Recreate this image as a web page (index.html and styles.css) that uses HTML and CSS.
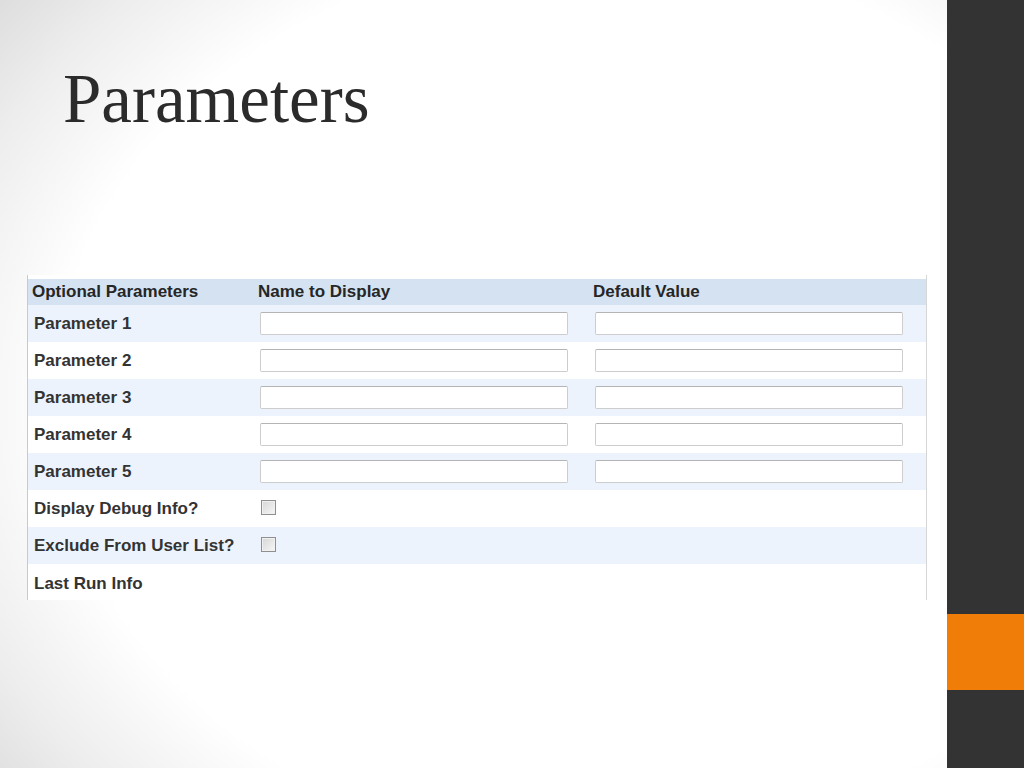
FILE: index.html
```html
<!DOCTYPE html>
<html>

<head>
  <title>Parameters</title>
  <link rel="stylesheet" href="styles.css">
</head>

<body>
  <div class="slide">
    <div class="main">
      <h1 class="title">Parameters</h1>

      <div class="params">
        <div class="row head">
          <div class="cell label">Optional Parameters</div>
          <div class="cell">Name to Display</div>
          <div class="cell">Default Value</div>
        </div>
        <div class="row alt">
          <div class="cell label">Parameter 1</div>
          <div class="cell"><input type="text" class="field"></div>
          <div class="cell"><input type="text" class="field"></div>
        </div>
        <div class="row">
          <div class="cell label">Parameter 2</div>
          <div class="cell"><input type="text" class="field"></div>
          <div class="cell"><input type="text" class="field"></div>
        </div>
        <div class="row alt">
          <div class="cell label">Parameter 3</div>
          <div class="cell"><input type="text" class="field"></div>
          <div class="cell"><input type="text" class="field"></div>
        </div>
        <div class="row">
          <div class="cell label">Parameter 4</div>
          <div class="cell"><input type="text" class="field"></div>
          <div class="cell"><input type="text" class="field"></div>
        </div>
        <div class="row alt">
          <div class="cell label">Parameter 5</div>
          <div class="cell"><input type="text" class="field"></div>
          <div class="cell"><input type="text" class="field"></div>
        </div>
        <div class="row">
          <div class="cell label">Display Debug Info?</div>
          <div class="cell"><span class="check"></span></div>
          <div class="cell"></div>
        </div>
        <div class="row alt">
          <div class="cell label">Exclude From User List?</div>
          <div class="cell"><span class="check"></span></div>
          <div class="cell"></div>
        </div>
        <div class="row last">
          <div class="cell label">Last Run Info</div>
          <div class="cell"></div>
          <div class="cell"></div>
        </div>
      </div>
    </div>

    <div class="side">
      <div class="accent"></div>
    </div>
  </div>
</body>

</html>
```

FILE: styles.css
```css
body {
  margin: 0;
  font-family: "Liberation Sans", Arial, sans-serif;
}

.slide {
  display: flex;
  width: 1024px;
  height: 768px;
  overflow: hidden;
}

.main {
  width: 947px;
  height: 768px;
  background: radial-gradient(ellipse 680px 560px at 600px 400px, #ffffff 0%, #ffffff 80%, #ededed 100%, #d6d6d6 120%);
  padding-top: 57px;
  box-sizing: border-box;
}

.title {
  margin: 0 0 0 63px;
  font-family: "Liberation Serif", "Times New Roman", serif;
  font-weight: normal;
  font-size: 69px;
  line-height: 84px;
  color: #2b2b2b;
}

.params {
  margin: 134px 0 0 27px;
  width: 898px;
  border-left: 1px solid #c9c9c9;
  border-right: 1px solid #d6d6d6;
  padding-top: 4px;
  background: #fff;
  color: #333;
  font-size: 17px;
  font-weight: bold;
}

.row {
  display: grid;
  grid-template-columns: 228px 335px 1fr;
  align-items: center;
  height: 37px;
}

.row.head {
  height: 26px;
  background-color: #d4e2f1;
  color: #262626;
}

.row.alt {
  background-color: #edf3fc;
}

.row.last {
  height: 36px;
}

.cell {
  padding-left: 2px;
}

.label {
  padding-left: 6px;
  padding-top: 1px;
}

.head .label {
  padding-left: 4px;
  padding-top: 0;
}

.last .label {
  padding-top: 3px;
}

.field {
  display: block;
  width: 308px;
  height: 23px;
  margin-left: 2px;
  box-sizing: border-box;
  border: 1px solid #cdcdcd;
  border-top-color: #b4b4b4;
  border-radius: 2px;
  background: #fff;
  padding: 0 4px;
}

.check {
  display: block;
  width: 15px;
  height: 15px;
  margin: 0 0 3px 3px;
  box-sizing: border-box;
  border: 1px solid #8f8f8f;
  background: linear-gradient(135deg, #d6d6d6, #f7f7f7);
  box-shadow: inset 0 0 0 1px #f0f0f0;
}

.side {
  width: 77px;
  height: 768px;
  background-color: #333333;
  padding-top: 614px;
  box-sizing: border-box;
}

.accent {
  height: 76px;
  background-color: #ef7d08;
}
```
